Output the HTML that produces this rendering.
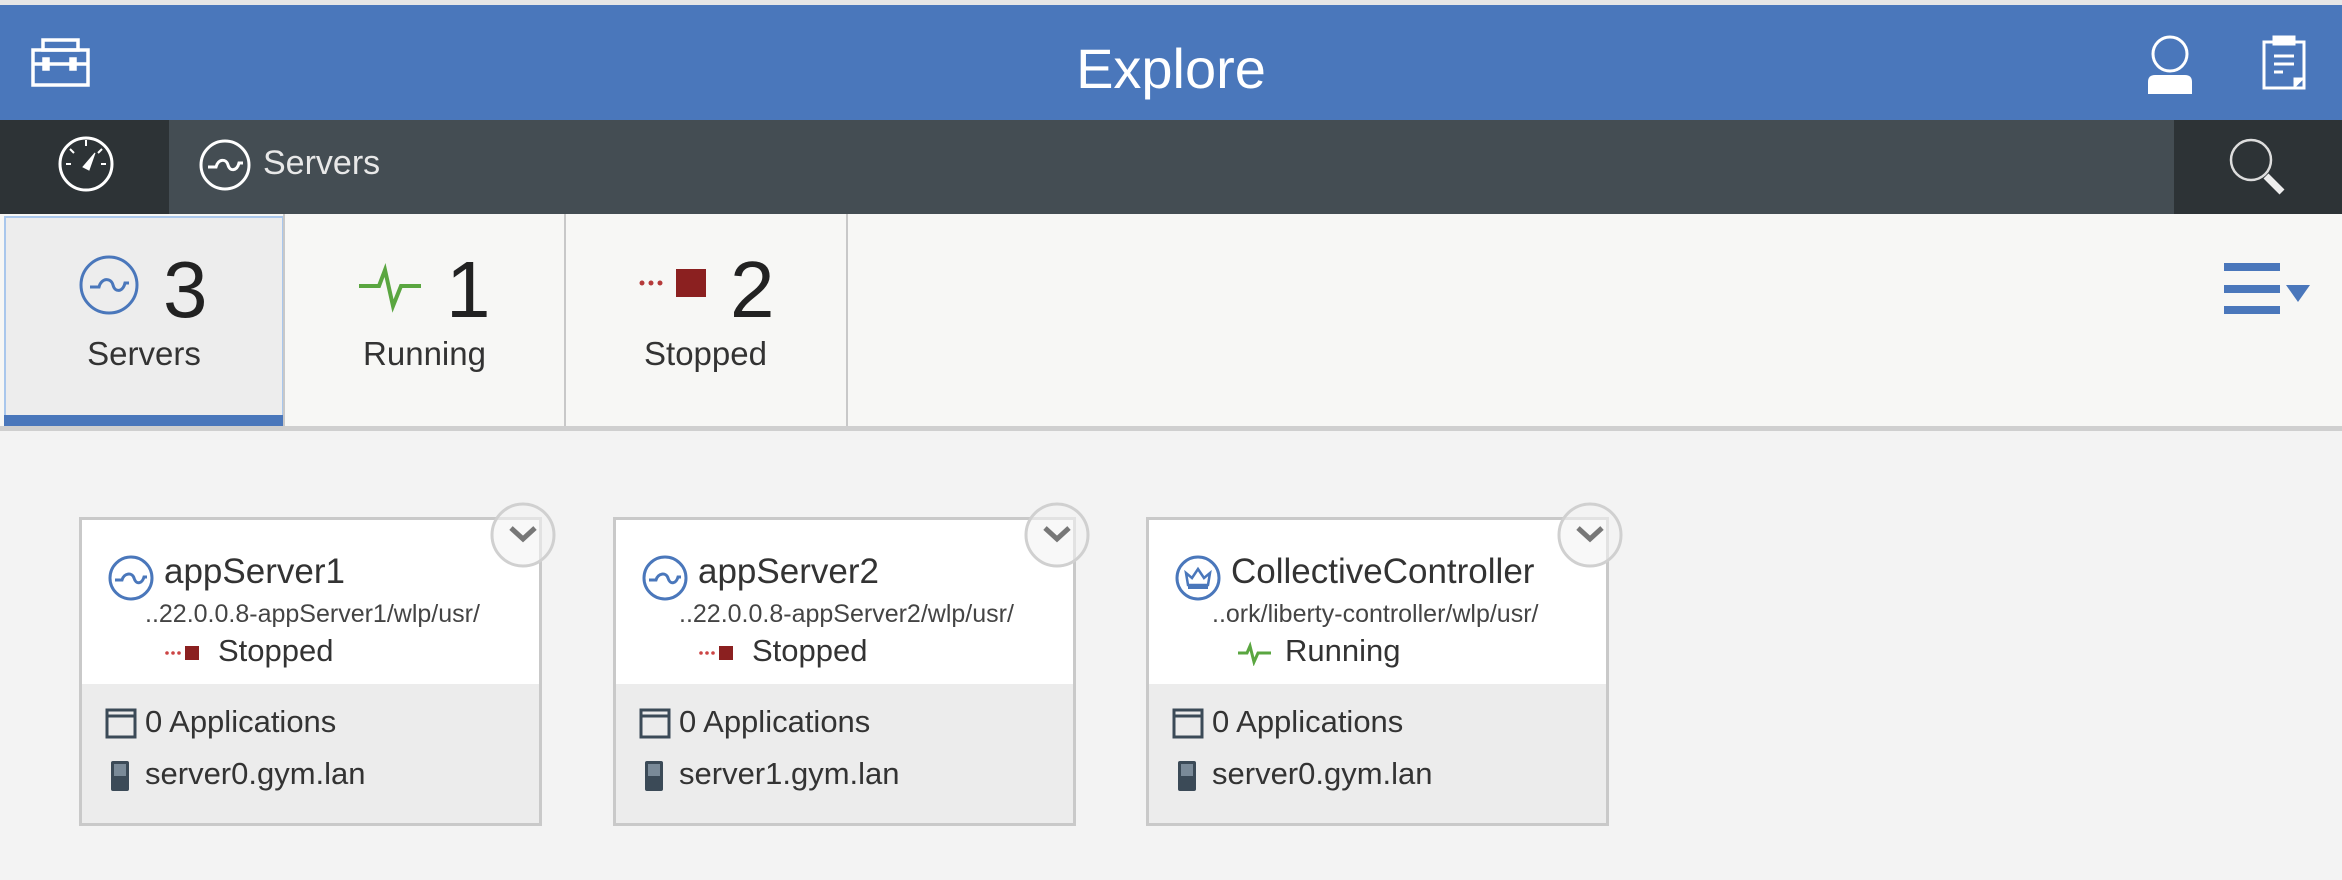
<!DOCTYPE html>
<html><head><meta charset="utf-8"><style>
*{margin:0;padding:0;box-sizing:border-box}
body{width:2342px;height:880px;overflow:hidden;background:#f3f3f3;font-family:"Liberation Sans",sans-serif;color:#333;position:relative}
.a{position:absolute}
.card{position:absolute;top:517px;width:463px;height:309px;border:3px solid #c9c9c9;background:#ececec}
.card .top{position:absolute;left:0;top:0;right:0;height:164px;background:#fff}
.t{position:absolute;white-space:nowrap}
</style></head><body>
<div class="a" style="left:0;top:0;width:2342px;height:5px;background:#e6e6e6"></div>
<div class="a" style="left:0;top:5px;width:2342px;height:115px;background:#4a77bb"></div>
<svg class="a" style="left:30px;top:38px" width="62" height="50" viewBox="0 0 62 50" fill="none" stroke="#fff" stroke-width="3.5">
<rect x="3" y="12" width="55" height="35"/><rect x="13" y="2" width="35" height="10"/><line x1="3" y1="26" x2="58" y2="26"/><rect x="14" y="21" width="4" height="10" fill="#fff"/><rect x="41" y="21" width="4" height="10" fill="#fff"/></svg>
<div class="t" style="left:0;width:2342px;text-align:center;top:36px;font-size:56px;color:#fff">Explore</div>
<svg class="a" style="left:2146px;top:34px" width="52" height="60" viewBox="0 0 52 60"><circle cx="24" cy="20" r="17" fill="none" stroke="#fff" stroke-width="3"/><path d="M2 60V48q0-7 7-7h30q7 0 7 7v12z" fill="#fff"/></svg>
<svg class="a" style="left:2262px;top:34px" width="46" height="58" viewBox="0 0 46 58" fill="none" stroke="#fff" stroke-width="3"><path d="M2 8h40v46H2z"/><path d="M12 3h20v7H12z" fill="#fff"/><path d="M12 22h20M12 30h20M12 38h9" stroke-width="3"/><path d="M32 54l10-10h-10z" fill="#fff" stroke-width="1"/></svg>
<div class="a" style="left:0;top:120px;width:2342px;height:94px;background:#444d53"></div>
<div class="a" style="left:0;top:120px;width:169px;height:94px;background:#2d3336"></div>
<div class="a" style="left:2174px;top:120px;width:168px;height:94px;background:#2d3336"></div>
<svg class="a" style="left:56px;top:134px" width="60" height="60" viewBox="0 0 60 60" fill="none" stroke="#fff" stroke-width="3"><circle cx="30" cy="30" r="26"/><path d="M30 6v6M10 30h5M45 30h5M14 15l4 4M46 15l-4 4" stroke-width="2"/><path d="M27 33l12-14-6 17z" fill="#fff" stroke-width="1"/></svg>
<svg class="a" style="left:198px;top:138px" width="54" height="54" viewBox="0 0 54 54" fill="none" stroke="#fff" stroke-width="3"><circle cx="27" cy="27" r="24"/><path d="M10 29h8c2-8 10-9 12-2c2 7 9 6 11-2h4" stroke-width="3"/></svg>
<div class="t" style="left:263px;top:144px;font-size:34px;color:#e8e8e8">Servers</div>
<svg class="a" style="left:2225px;top:134px" width="72" height="70" viewBox="0 0 72 70" fill="none" stroke="#ddd"><circle cx="26" cy="26" r="20" stroke-width="2.5"/><path d="M41 42l16 16" stroke-width="7" stroke="#eee"/></svg>
<div class="a" style="left:0;top:214px;width:2342px;height:212px;background:#f7f7f5"></div>
<div class="a" style="left:0;top:426px;width:2342px;height:5px;background:#cfcfcf"></div>
<div class="a" style="left:4px;top:216px;width:280px;height:210px;background:#ededed;border:2px solid #a9c7ec"></div>
<div class="a" style="left:4px;top:415px;width:280px;height:11px;background:#4a77bb"></div>
<div class="a" style="left:283px;top:214px;width:2px;height:212px;background:#c8c8c8"></div>
<div class="a" style="left:564px;top:214px;width:2px;height:212px;background:#c8c8c8"></div>
<div class="a" style="left:846px;top:214px;width:2px;height:212px;background:#c8c8c8"></div>
<svg class="a" style="left:78px;top:254px" width="62" height="62" viewBox="0 0 62 62" fill="none" stroke="#4a77bb" stroke-width="3"><circle cx="31" cy="31" r="28"/><path d="M12 33h9c2-9 12-10 14-2c2 8 10 7 12-2h4"/></svg>
<div class="t" style="left:163px;top:244px;font-size:80px;color:#222">3</div>
<div class="t" style="left:4px;width:280px;text-align:center;top:335px;font-size:33px">Servers</div>
<svg class="a" style="left:357px;top:258px" width="66" height="60" viewBox="0 0 66 60" fill="none" stroke="#5aa640" stroke-width="4"><path d="M2 28h20l6-16 8 36 8-20h20"/></svg>
<div class="t" style="left:446px;top:244px;font-size:80px;color:#222">1</div>
<div class="t" style="left:284px;width:281px;text-align:center;top:335px;font-size:33px">Running</div>
<svg class="a" style="left:638px;top:268px" width="70" height="30" viewBox="0 0 70 30"><circle cx="4" cy="15" r="2.5" fill="#b53a3a"/><circle cx="13" cy="15" r="2.5" fill="#b53a3a"/><circle cx="22" cy="15" r="2.5" fill="#b53a3a"/><rect x="38" y="1" width="30" height="28" fill="#8b2020"/></svg>
<div class="t" style="left:730px;top:244px;font-size:80px;color:#222">2</div>
<div class="t" style="left:565px;width:281px;text-align:center;top:335px;font-size:33px">Stopped</div>
<svg class="a" style="left:2222px;top:260px" width="90" height="56" viewBox="0 0 90 56" fill="#4a77bb"><rect x="2" y="3" width="56" height="8"/><rect x="2" y="25" width="56" height="8"/><rect x="2" y="46" width="56" height="8"/><path d="M64 25h24l-12 17z"/></svg>

<!-- card 1 -->
<div class="card" style="left:79px"><div class="top"></div>
<svg class="a" style="left:24px;top:33px" width="50" height="50" viewBox="0 0 50 50" fill="none" stroke="#4a77bb" stroke-width="3"><circle cx="25" cy="25" r="21"/><path d="M9 27h7c2-7 10-8 12-2c2 7 8 6 10-1h3"/></svg>
<div class="t" style="left:82px;top:32px;font-size:35px">appServer1</div>
<div class="t" style="left:63px;top:80px;font-size:25px;color:#444">..22.0.0.8-appServer1/wlp/usr/</div>
<svg class="a" style="left:82px;top:124px" width="38" height="18" viewBox="0 0 38 18"><circle cx="3" cy="9" r="1.8" fill="#c44"/><circle cx="9" cy="9" r="1.8" fill="#c44"/><circle cx="15" cy="9" r="1.8" fill="#c44"/><rect x="21" y="2" width="14" height="14" fill="#8b2020"/></svg>
<div class="t" style="left:136px;top:113px;font-size:31px">Stopped</div>
<svg class="a" style="left:23px;top:188px" width="32" height="32" viewBox="0 0 32 32" fill="none" stroke="#3b4a57" stroke-width="3"><rect x="2" y="2" width="28" height="27"/><line x1="2" y1="8" x2="30" y2="8"/></svg>
<div class="t" style="left:63px;top:184px;font-size:31px">0 Applications</div>
<svg class="a" style="left:28px;top:240px" width="20" height="32" viewBox="0 0 20 32"><rect x="1" y="1" width="18" height="30" rx="2" fill="#3b4a57"/><rect x="4" y="4" width="12" height="12" fill="#7a8a98"/></svg>
<div class="t" style="left:63px;top:236px;font-size:31px">server0.gym.lan</div>
</div>
<!-- card 2 -->
<div class="card" style="left:613px"><div class="top"></div>
<svg class="a" style="left:24px;top:33px" width="50" height="50" viewBox="0 0 50 50" fill="none" stroke="#4a77bb" stroke-width="3"><circle cx="25" cy="25" r="21"/><path d="M9 27h7c2-7 10-8 12-2c2 7 8 6 10-1h3"/></svg>
<div class="t" style="left:82px;top:32px;font-size:35px">appServer2</div>
<div class="t" style="left:63px;top:80px;font-size:25px;color:#444">..22.0.0.8-appServer2/wlp/usr/</div>
<svg class="a" style="left:82px;top:124px" width="38" height="18" viewBox="0 0 38 18"><circle cx="3" cy="9" r="1.8" fill="#c44"/><circle cx="9" cy="9" r="1.8" fill="#c44"/><circle cx="15" cy="9" r="1.8" fill="#c44"/><rect x="21" y="2" width="14" height="14" fill="#8b2020"/></svg>
<div class="t" style="left:136px;top:113px;font-size:31px">Stopped</div>
<svg class="a" style="left:23px;top:188px" width="32" height="32" viewBox="0 0 32 32" fill="none" stroke="#3b4a57" stroke-width="3"><rect x="2" y="2" width="28" height="27"/><line x1="2" y1="8" x2="30" y2="8"/></svg>
<div class="t" style="left:63px;top:184px;font-size:31px">0 Applications</div>
<svg class="a" style="left:28px;top:240px" width="20" height="32" viewBox="0 0 20 32"><rect x="1" y="1" width="18" height="30" rx="2" fill="#3b4a57"/><rect x="4" y="4" width="12" height="12" fill="#7a8a98"/></svg>
<div class="t" style="left:63px;top:236px;font-size:31px">server1.gym.lan</div>
</div>
<!-- card 3 -->
<div class="card" style="left:1146px"><div class="top"></div>
<svg class="a" style="left:24px;top:33px" width="50" height="50" viewBox="0 0 50 50" fill="none" stroke="#4a77bb" stroke-width="3"><circle cx="25" cy="25" r="21"/><path d="M13 20l6 5 6-9 6 9 6-5-2 12H15z" stroke-width="2.5"/><rect x="15" y="32" width="20" height="4" fill="#4a77bb" stroke="none"/></svg>
<div class="t" style="left:82px;top:32px;font-size:35px">CollectiveController</div>
<div class="t" style="left:63px;top:80px;font-size:25px;color:#444">..ork/liberty-controller/wlp/usr/</div>
<svg class="a" style="left:88px;top:120px" width="36" height="26" viewBox="0 0 36 26" fill="none" stroke="#5aa640" stroke-width="3"><path d="M1 13h9l3-7 4 16 4-9h13"/></svg>
<div class="t" style="left:136px;top:113px;font-size:31px">Running</div>
<svg class="a" style="left:23px;top:188px" width="32" height="32" viewBox="0 0 32 32" fill="none" stroke="#3b4a57" stroke-width="3"><rect x="2" y="2" width="28" height="27"/><line x1="2" y1="8" x2="30" y2="8"/></svg>
<div class="t" style="left:63px;top:184px;font-size:31px">0 Applications</div>
<svg class="a" style="left:28px;top:240px" width="20" height="32" viewBox="0 0 20 32"><rect x="1" y="1" width="18" height="30" rx="2" fill="#3b4a57"/><rect x="4" y="4" width="12" height="12" fill="#7a8a98"/></svg>
<div class="t" style="left:63px;top:236px;font-size:31px">server0.gym.lan</div>
</div>
<!-- chevrons -->
<svg class="a" style="left:489px;top:501px" width="68" height="68" viewBox="0 0 68 68"><circle cx="34" cy="34" r="31" fill="#f3f3f3" fill-opacity=".6" stroke="#d0d0d0" stroke-width="3"/><path d="M22 27l12 11 12-11" fill="none" stroke="#777" stroke-width="5"/></svg>
<svg class="a" style="left:1023px;top:501px" width="68" height="68" viewBox="0 0 68 68"><circle cx="34" cy="34" r="31" fill="#f3f3f3" fill-opacity=".6" stroke="#d0d0d0" stroke-width="3"/><path d="M22 27l12 11 12-11" fill="none" stroke="#777" stroke-width="5"/></svg>
<svg class="a" style="left:1556px;top:501px" width="68" height="68" viewBox="0 0 68 68"><circle cx="34" cy="34" r="31" fill="#f3f3f3" fill-opacity=".6" stroke="#d0d0d0" stroke-width="3"/><path d="M22 27l12 11 12-11" fill="none" stroke="#777" stroke-width="5"/></svg>
</body></html>
